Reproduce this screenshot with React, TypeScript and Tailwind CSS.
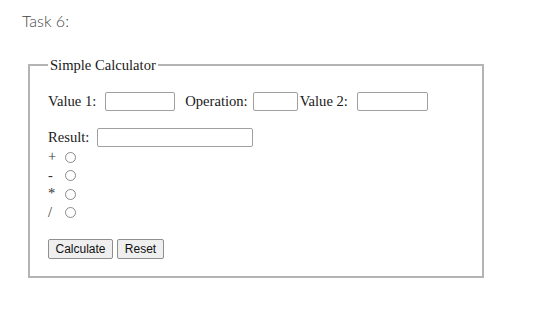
import React from 'react';

const serif = { fontFamily: '"Liberation Serif", "Times New Roman", serif' };

const TextBox = ({ className }: { className: string }) => (
  <input
    type="text"
    className={`h-[19px] border border-[#a0a0a0] rounded-[2px] bg-white px-1 outline-none ${className}`}
  />
);

const ops = ['+', '-', '*', '/'];

export default function App() {
  return (
    <div className="w-[548px] h-[326px] bg-white overflow-hidden" style={serif}>
      <div
        className="pl-[22px] pt-[11px] text-[16px] leading-[20px] font-light text-[#444]"
        style={{ fontFamily: 'Lato, "Liberation Sans", sans-serif' }}
      >
        Task 6:
      </div>

      <fieldset className="ml-[28px] mt-[25px] w-[456px] h-[222px] border-2 border-[#b4b4b4] pl-[18px] text-[14.6px] text-[#1a1a1a]">
        <legend className="px-[2px] leading-[18px] text-[14.6px] text-[#1a1a1a]">Simple Calculator</legend>

        {/* Values row */}
        <div className="mt-[18px] flex items-center h-[19px]">
          <span>Value 1:</span>
          <TextBox className="ml-[9px] w-[70px]" />
          <span className="ml-[10px]">Operation:</span>
          <TextBox className="ml-[5px] w-[45px]" />
          <span className="ml-[2px]">Value 2:</span>
          <TextBox className="ml-[9px] w-[71px]" />
        </div>

        {/* Result row */}
        <div className="mt-[17px] flex items-center h-[19px]">
          <span>Result:</span>
          <TextBox className="ml-[8px] w-[156px]" />
        </div>

        {/* Operator radios */}
        <div className="mt-[1px] flex flex-col">
          {ops.map((op) => (
            <label key={op} className="flex items-center h-[18.5px]">
              <span className="w-[14px] text-[#333]">{op}</span>
              <input
                type="radio"
                name="op"
                className="ml-[3px] appearance-none w-[11px] h-[11px] rounded-full border border-[#8a8a8a] bg-white"
              />
            </label>
          ))}
        </div>

        {/* Buttons */}
        <div
          className="mt-[17px] flex gap-[4px] text-[12px] text-[#111]"
          style={{ fontFamily: '"Liberation Sans", Arial, sans-serif' }}
        >
          <button className="w-[65px] h-[20px] bg-[#efefef] border border-[#8f8f8f] rounded-[2px]">Calculate</button>
          <button className="w-[47px] h-[20px] bg-[#efefef] border border-[#8f8f8f] rounded-[2px]">Reset</button>
        </div>
      </fieldset>
    </div>
  );
}
